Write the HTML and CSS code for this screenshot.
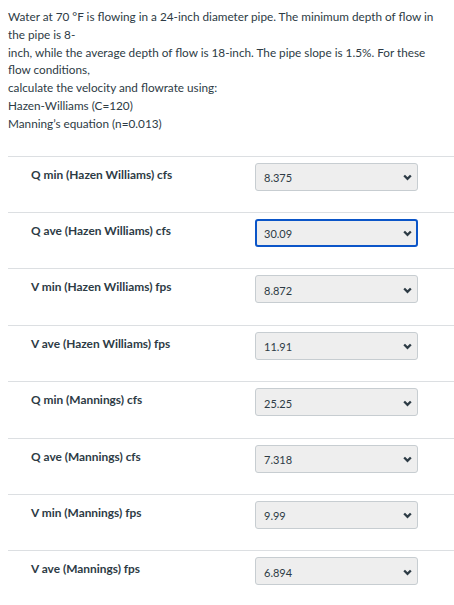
FILE: index.html
```html
<!DOCTYPE html>
<html>
<head>
<meta charset="utf-8">
<link rel="stylesheet" href="styles.css">
</head>
<body>
<div class="page">
  <div class="intro">
    <div class="line">Water at 70 °F is flowing in a 24-inch diameter pipe. The minimum depth of flow in</div>
    <div class="line">the pipe is 8-</div>
    <div class="line">inch, while the average depth of flow is 18-inch. The pipe slope is 1.5%. For these</div>
    <div class="line">flow conditions,</div>
    <div class="line">calculate the velocity and flowrate using:</div>
    <div class="line">Hazen-Williams (C=120)</div>
    <div class="line">Manning’s equation (n=0.013)</div>
  </div>
  <div class="answers">
    <div class="row">
      <div class="label">Q min (Hazen Williams) cfs</div>
      <div class="select"><span class="val">8.375</span><svg class="chev" viewBox="0 0 10 7" width="9" height="7"><path d="M1.3 1.3 L5 5 L8.7 1.3" fill="none" stroke="#2d3b45" stroke-width="2.6"/></svg></div>
    </div>
    <div class="row">
      <div class="label">Q ave (Hazen Williams) cfs</div>
      <div class="select focus"><span class="val">30.09</span><svg class="chev" viewBox="0 0 10 7" width="9" height="7"><path d="M1.3 1.3 L5 5 L8.7 1.3" fill="none" stroke="#2d3b45" stroke-width="2.6"/></svg></div>
    </div>
    <div class="row">
      <div class="label">V min (Hazen Williams) fps</div>
      <div class="select"><span class="val">8.872</span><svg class="chev" viewBox="0 0 10 7" width="9" height="7"><path d="M1.3 1.3 L5 5 L8.7 1.3" fill="none" stroke="#2d3b45" stroke-width="2.6"/></svg></div>
    </div>
    <div class="row">
      <div class="label">V ave (Hazen Williams) fps</div>
      <div class="select"><span class="val">11.91</span><svg class="chev" viewBox="0 0 10 7" width="9" height="7"><path d="M1.3 1.3 L5 5 L8.7 1.3" fill="none" stroke="#2d3b45" stroke-width="2.6"/></svg></div>
    </div>
    <div class="row">
      <div class="label">Q min (Mannings) cfs</div>
      <div class="select"><span class="val">25.25</span><svg class="chev" viewBox="0 0 10 7" width="9" height="7"><path d="M1.3 1.3 L5 5 L8.7 1.3" fill="none" stroke="#2d3b45" stroke-width="2.6"/></svg></div>
    </div>
    <div class="row">
      <div class="label">Q ave (Mannings) cfs</div>
      <div class="select"><span class="val">7.318</span><svg class="chev" viewBox="0 0 10 7" width="9" height="7"><path d="M1.3 1.3 L5 5 L8.7 1.3" fill="none" stroke="#2d3b45" stroke-width="2.6"/></svg></div>
    </div>
    <div class="row">
      <div class="label">V min (Mannings) fps</div>
      <div class="select"><span class="val">9.99</span><svg class="chev" viewBox="0 0 10 7" width="9" height="7"><path d="M1.3 1.3 L5 5 L8.7 1.3" fill="none" stroke="#2d3b45" stroke-width="2.6"/></svg></div>
    </div>
    <div class="row">
      <div class="label">V ave (Mannings) fps</div>
      <div class="select"><span class="val">6.894</span><svg class="chev" viewBox="0 0 10 7" width="9" height="7"><path d="M1.3 1.3 L5 5 L8.7 1.3" fill="none" stroke="#2d3b45" stroke-width="2.6"/></svg></div>
    </div>
  </div>
</div>
</body>
</html>
```
FILE: styles.css
```css
html, body {
  margin: 0;
  padding: 0;
  background: #ffffff;
}
.page {
  padding: 8px 0 0 8px;
  font-family: Lato, "Liberation Sans", sans-serif;
  color: #2d3b45;
}
.intro {
  font-size: 11.75px;
  line-height: 17.8px;
}
.line {
  white-space: nowrap;
}
.answers {
  margin-top: 23px;
}
.row {
  border-top: 1px solid #dcdfe2;
  height: 55.4px;
  display: flex;
  align-items: flex-start;
}
.label {
  width: 224px;
  padding-left: 23px;
  padding-top: 10px;
  font-size: 11.9px;
  font-weight: bold;
  line-height: 15px;
}
.select {
  margin-top: 6px;
  width: 163px;
  height: 28px;
  box-sizing: border-box;
  border: 1px solid #c7cdd1;
  border-radius: 3px;
  background: #eeeeee;
  display: flex;
  align-items: center;
  justify-content: space-between;
  padding: 2px 5px 0 8px;
  font-size: 11px;
  color: #2d3b45;
}
.select.focus {
  border: 2px solid #0b55c8;
  padding: 2px 4px 0 7px;
}
.chev {
  display: block;
}
```
